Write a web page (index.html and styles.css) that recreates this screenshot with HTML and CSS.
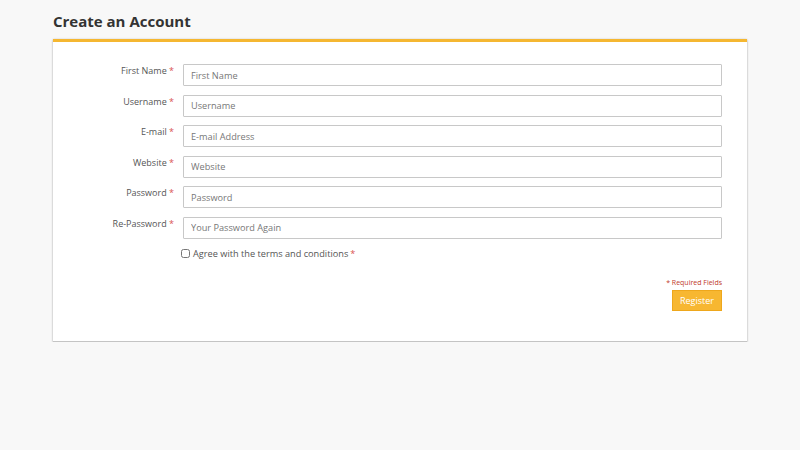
FILE: index.html
```html
<!doctype html>
<html>
	<head>
		<meta charset="UTF-8">
		<title>Create an Account</title>
		<link rel="stylesheet" href="styles.css">
	</head>
	<body>
		<div class="wrap">
			<h1 class="title">Create an Account</h1>
			<div class="card">
				<form class="form">
					<label class="lbl">First Name <span class="req">*</span></label>
					<input class="field" type="text" placeholder="First Name">
					<label class="lbl">Username <span class="req">*</span></label>
					<input class="field" type="text" placeholder="Username">
					<label class="lbl">E-mail <span class="req">*</span></label>
					<input class="field" type="text" placeholder="E-mail Address">
					<label class="lbl">Website <span class="req">*</span></label>
					<input class="field" type="text" placeholder="Website">
					<label class="lbl">Password <span class="req">*</span></label>
					<input class="field" type="password" placeholder="Password">
					<label class="lbl">Re-Password <span class="req">*</span></label>
					<input class="field" type="password" placeholder="Your Password Again">
					<div class="agree"><input class="chk" type="checkbox"> Agree with the terms and conditions <span class="req">*</span></div>
				</form>
				<div class="foot">
					<p class="note">* Required Fields</p>
					<button class="btn" type="button">Register</button>
				</div>
			</div>
		</div>
	</body>
</html>
```

FILE: styles.css
```css
body{
	margin:0;
	background-color:#f8f8f8;
	font-family:"Open Sans",sans-serif;
	color:#555
}
.wrap{width:694px;margin:0 auto;padding-top:10px}
.title{font-size:15px;font-weight:700;color:#333;margin:0 0 7px 0;line-height:22px}
.card{
	background:#fff;
	border-top:3px solid #f5b731;
	border-bottom:1px solid #c4c4c4;
	box-shadow:0 1px 2px rgba(0,0,0,0.25),0 0 2px rgba(0,0,0,0.12);
	padding:22px 25px 30px 0
}
.form{
	display:grid;
	grid-template-columns:121px 1fr;
	column-gap:9px;
	row-gap:8.6px;
	margin:0
}
.lbl{font-size:9px;text-align:right;padding-top:1px;line-height:12px;color:#555}
.req{color:#d9534f}
.field{
	height:22px;
	box-sizing:border-box;
	border:1px solid #c8c8c8;
	border-radius:1px;
	padding:0 7px;
	font-family:"Open Sans",sans-serif;
	font-size:9.2px;
	color:#555;
	margin:0
}
.field::placeholder{color:#777}
.agree{grid-column:2;font-size:9.2px;display:flex;align-items:center;gap:2px;margin-left:-2px;margin-top:-1px}
.chk{width:9px;height:9px;margin:0 1px 0 0}
.foot{display:flex;flex-direction:column;align-items:flex-end;margin-top:18px}
.note{font-size:7px;color:#c0392b;margin:0 0 2px 0;line-height:10px}
.btn{
	background:#f7b731;
	border:1px solid #eea71c;
	color:#fff;
	font-family:"Open Sans",sans-serif;
	font-size:9px;
	width:50px;
	height:21px;
	padding:0;
	border-radius:0
}
```
